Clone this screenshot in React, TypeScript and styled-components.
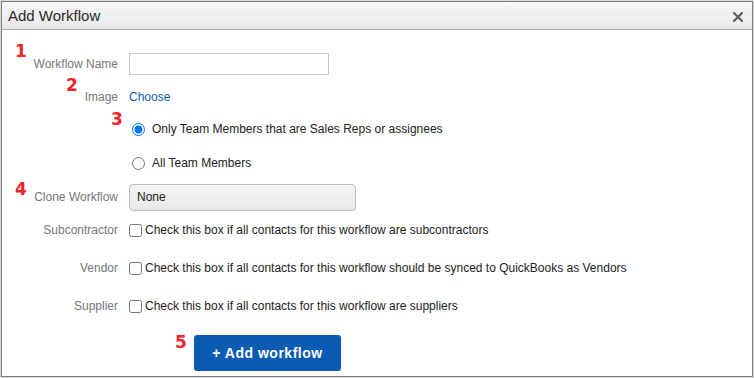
import React from "react";
import styled, { createGlobalStyle } from "styled-components";

const Global = createGlobalStyle`
  html, body { margin: 0; padding: 0; background: #d9d9d9; }
  body { font-family: "Liberation Sans", Arial, sans-serif; }
  #root { width: 754px; height: 378px; }
`;

const Dialog = styled.div`
  margin: 1px 0 0 1px;
  width: 752px;
  height: 376px;
  box-sizing: border-box;
  border: 1px solid #7d7d7d;
  background: #fff;
  display: flex;
  flex-direction: column;
`;

const Header = styled.div`
  height: 27px;
  border-bottom: 1px solid #a9a9a9;
  background: linear-gradient(#f6f6f6, #e9e9e9);
  display: flex;
  align-items: center;
  justify-content: space-between;
  padding: 0 9px 0 6px;
`;

const Title = styled.div`
  font-size: 15px;
  color: #2a2a2a;
`;

const Close = styled.svg`
  width: 10px;
  height: 10px;
  margin-top: 2px;
`;

const Body = styled.div`
  padding-top: 19px;
  display: flex;
  flex-direction: column;
`;

const Row = styled.div<{ $h: number; $mt?: number }>`
  position: relative;
  display: grid;
  grid-template-columns: 116px 1fr;
  column-gap: 11px;
  align-items: center;
  height: ${(p) => p.$h}px;
  margin-top: ${(p) => p.$mt ?? 0}px;
`;

const Label = styled.div`
  text-align: right;
  font-size: 12px;
  color: #777;
`;

const Content = styled.div`
  grid-column: 2;
  display: flex;
  align-items: center;
  font-size: 12px;
  color: #222;
`;

const Marker = styled.span<{ $x: number; $y: number }>`
  position: absolute;
  left: ${(p) => p.$x}px;
  top: ${(p) => p.$y}px;
  color: #f2232a;
  font-family: "DejaVu Sans", "Liberation Sans", sans-serif;
  font-weight: bold;
  font-size: 17px;
  line-height: 1;
`;

const TextInput = styled.input`
  width: 200px;
  height: 22px;
  box-sizing: border-box;
  border: 1px solid #c8c8c8;
  margin: 0;
  padding: 0 4px;
  outline: none;
`;

const Link = styled.a`
  color: #0c5bb0;
  font-size: 12px;
  text-decoration: none;
`;

const Radio = styled.input.attrs({ type: "radio" })`
  width: 13px;
  height: 13px;
  margin: 0 7px 0 3px;
`;

const Checkbox = styled.input.attrs({ type: "checkbox" })`
  width: 13px;
  height: 13px;
  margin: 0 3px 0 0;
`;

const Select = styled.div`
  width: 227px;
  height: 27px;
  box-sizing: border-box;
  border: 1px solid #bdbdbd;
  border-radius: 4px;
  background: linear-gradient(#f3f3f3, #e8e8e8);
  display: flex;
  align-items: center;
  padding-left: 7px;
  font-size: 12px;
  color: #222;
`;

const Button = styled.button`
  width: 147px;
  height: 36px;
  border: none;
  border-radius: 3px;
  background: #0b5bb3;
  color: #fff;
  font-family: "Liberation Sans", Arial, sans-serif;
  font-weight: bold;
  font-size: 14px;
  letter-spacing: 0.5px;
  margin-left: 65px;
  cursor: pointer;
`;

export default function App() {
  return (
    <>
      <Global />
      <Dialog>
        <Header>
          <Title>Add Workflow</Title>
          <Close viewBox="0 0 10 10">
            <path d="M1 1L9 9M9 1L1 9" stroke="#5f5f5f" strokeWidth="2.2" strokeLinecap="square" />
          </Close>
        </Header>
        <Body>
          <Row $h={30}>
            <Marker $x={13} $y={-6}>1</Marker>
            <Label>Workflow Name</Label>
            <Content>
              <TextInput />
            </Content>
          </Row>
          <Row $h={36}>
            <Marker $x={64} $y={-2}>2</Marker>
            <Label>Image</Label>
            <Content>
              <Link href="#">Choose</Link>
            </Content>
          </Row>
          <Row $h={28}>
            <Marker $x={109} $y={-4}>3</Marker>
            <Content>
              <Radio name="scope" defaultChecked />
              Only Team Members that are Sales Reps or assignees
            </Content>
          </Row>
          <Row $h={40}>
            <Content>
              <Radio name="scope" />
              All Team Members
            </Content>
          </Row>
          <Row $h={28}>
            <Marker $x={13} $y={-2}>4</Marker>
            <Label>Clone Workflow</Label>
            <Content>
              <Select>None</Select>
            </Content>
          </Row>
          <Row $h={38}>
            <Label>Subcontractor</Label>
            <Content>
              <Checkbox />
              Check this box if all contacts for this workflow are subcontractors
            </Content>
          </Row>
          <Row $h={38}>
            <Label>Vendor</Label>
            <Content>
              <Checkbox />
              Check this box if all contacts for this workflow should be synced to QuickBooks as Vendors
            </Content>
          </Row>
          <Row $h={38}>
            <Label>Supplier</Label>
            <Content>
              <Checkbox />
              Check this box if all contacts for this workflow are suppliers
            </Content>
          </Row>
          <Row $h={36} $mt={10}>
            <Marker $x={173} $y={-1}>5</Marker>
            <Content>
              <Button>+ Add workflow</Button>
            </Content>
          </Row>
        </Body>
      </Dialog>
    </>
  );
}
